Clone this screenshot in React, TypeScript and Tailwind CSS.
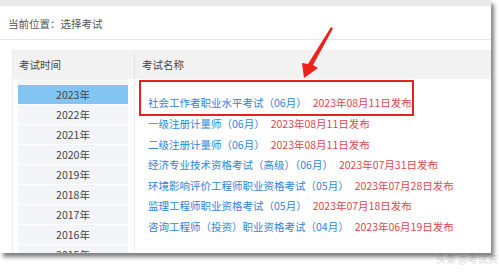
import React from "react";

const years = ["2023年", "2022年", "2021年", "2020年", "2019年", "2018年", "2017年", "2016年", "2015年"];

const items: [string, string][] = [
  ["社会工作者职业水平考试（06月）", "2023年08月11日发布"],
  ["一级注册计量师（06月）", "2023年08月11日发布"],
  ["二级注册计量师（06月）", "2023年08月11日发布"],
  ["经济专业技术资格考试（高级）（06月）", "2023年07月31日发布"],
  ["环境影响评价工程师职业资格考试（05月）", "2023年07月28日发布"],
  ["监理工程师职业资格考试（05月）", "2023年07月18日发布"],
  ["咨询工程师（投资）职业资格考试（04月）", "2023年06月19日发布"],
];

export default function App() {
  return (
    <div
      className="relative w-[499px] h-[280px] overflow-hidden bg-white text-[10.5px]"
      style={{ fontFamily: '"Noto Sans CJK SC", "Noto Sans", sans-serif' }}
    >
      <div className="relative z-10 flex h-[253px] w-[491px] flex-col overflow-hidden bg-white shadow-[3px_4px_4px_rgba(0,0,0,0.5)]">
        <div className="h-[6px] shrink-0 bg-[#e9e9e9]" />
        <div className="flex h-[33px] shrink-0 items-center pl-[8px] pt-[3px] text-[#555]">当前位置：选择考试</div>
        <div className="h-px shrink-0 bg-[#e6e6e6]" />
        <div className="ml-[12px] mt-[10px] flex flex-1 flex-col border-l border-[#ececec]">
          <div className="flex h-[29px] shrink-0 items-center bg-[#f2f2f2] text-[#444]">
            <div className="w-[121px] pl-[6px]">考试时间</div>
            <div className="h-full w-px bg-[#e4e4e4]" />
            <div className="pl-[7px]">考试名称</div>
          </div>
          <div className="flex flex-1">
            <div className="w-[115px] pl-[5px]">
              <div className="h-full w-[110px] bg-[#f3f5f9] pt-[6px]">
                {years.map((y, i) => (
                  <div
                    key={y}
                    className={
                      "flex h-[20px] items-center justify-center border-b border-white text-[#444] " +
                      (i === 0 ? "bg-[#82c5f3]" : "")
                    }
                  >
                    {y}
                  </div>
                ))}
              </div>
            </div>
            <div className="w-[6px]" />
            <div className="w-px bg-[#eeeeee]" />
            <div className="flex flex-col pl-[13px] pt-[14px]">
              {items.map(([t, d], i) => (
                <div key={t} className="relative flex h-[20.6px] items-center whitespace-nowrap">
                  {i === 0 && (
                    <div className="absolute left-[-9px] top-[-13px] h-[36px] w-[275px] border-2 border-[#e4231f]" />
                  )}
                  <span className="text-[#2f83dc]">{t}</span>
                  <span className="ml-[6px] text-[#e0464f]">{d}</span>
                </div>
              ))}
            </div>
          </div>
        </div>
      </div>
      <svg className="absolute left-0 top-0 z-20" width="499" height="280" viewBox="0 0 499 280">
        <polygon points="331,27 333,28.5 313,65 318,68 304,78 302,63 308,64" fill="#f0201a" />
      </svg>
      <div className="absolute left-[436px] top-[251px] whitespace-nowrap text-[10px] text-[#dcdcdc]">头条 @考试资讯</div>
    </div>
  );
}
